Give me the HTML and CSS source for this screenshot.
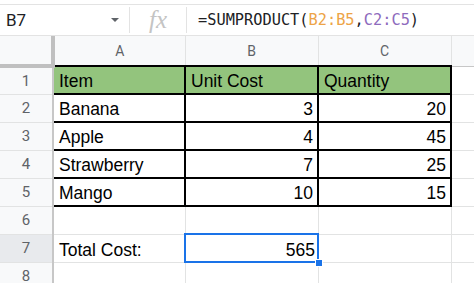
FILE: index.html
```html
<!DOCTYPE html>
<html lang="en">
<head>
    <meta charset="UTF-8">
    <title>SUMPRODUCT example</title>
    <link rel="stylesheet" href="styles.css">
</head>
<body>
    <div class="formula-bar">
        <div class="name-box">
            <span>B7</span>
            <span class="arrow"></span>
        </div>
        <div class="sep"></div>
        <div class="fx">fx</div>
        <div class="sep"></div>
        <div class="formula">=SUMPRODUCT(<span class="ref-b">B2:B5</span>,<span class="ref-c">C2:C5</span>)</div>
    </div>
    <table class="sheet">
        <colgroup>
            <col class="col-rows">
            <col class="col-a">
            <col class="col-b">
            <col class="col-c">
            <col class="col-d">
        </colgroup>
        <tr class="col-heads">
            <th class="corner"></th>
            <th>A</th>
            <th>B</th>
            <th>C</th>
            <th></th>
        </tr>
        <tr>
            <th class="row-head">1</th>
            <td class="box head">Item</td>
            <td class="box head">Unit Cost</td>
            <td class="box head">Quantity</td>
            <td></td>
        </tr>
        <tr>
            <th class="row-head">2</th>
            <td class="box">Banana</td>
            <td class="box num">3</td>
            <td class="box num">20</td>
            <td></td>
        </tr>
        <tr>
            <th class="row-head">3</th>
            <td class="box">Apple</td>
            <td class="box num">4</td>
            <td class="box num">45</td>
            <td></td>
        </tr>
        <tr>
            <th class="row-head">4</th>
            <td class="box">Strawberry</td>
            <td class="box num">7</td>
            <td class="box num">25</td>
            <td></td>
        </tr>
        <tr>
            <th class="row-head">5</th>
            <td class="box">Mango</td>
            <td class="box num">10</td>
            <td class="box num">15</td>
            <td></td>
        </tr>
        <tr>
            <th class="row-head">6</th>
            <td></td>
            <td></td>
            <td></td>
            <td></td>
        </tr>
        <tr>
            <th class="row-head active">7</th>
            <td>Total Cost:</td>
            <td class="num selected"><div class="cell-wrap">565<span class="handle"></span></div></td>
            <td></td>
            <td></td>
        </tr>
        <tr>
            <th class="row-head">8</th>
            <td></td>
            <td></td>
            <td></td>
            <td></td>
        </tr>
    </table>
</body>
</html>
```

FILE: styles.css
```css
body {
    margin: 0;
    width: 474px;
    height: 283px;
    overflow: hidden;
    background: #fff;
    font-family: Roboto, "Liberation Sans", sans-serif;
}

.formula-bar {
    margin-top: 4px;
    height: 30px;
    border-top: 1px solid #e3e3e3;
    border-bottom: 1px solid #e3e3e3;
    display: flex;
    align-items: center;
}
.name-box {
    width: 129px;
    box-sizing: border-box;
    padding: 0 10px 0 6px;
    display: flex;
    align-items: center;
    justify-content: space-between;
    font-size: 17px;
    color: #202124;
}
.arrow {
    width: 0;
    height: 0;
    border-left: 4px solid transparent;
    border-right: 4px solid transparent;
    border-top: 4px solid #5f6368;
}
.sep {
    width: 1px;
    height: 26px;
    background: #e3e3e3;
}
.fx {
    width: 56px;
    text-align: center;
    font-family: "Liberation Serif", serif;
    font-style: italic;
    font-size: 25px;
    color: #c4c4c4;
    line-height: 30px;
}
.formula {
    padding-left: 11px;
    font-family: "DejaVu Sans Mono", monospace;
    font-size: 15.3px;
    color: #202124;
}
.ref-b {
    color: #eda447;
}
.ref-c {
    color: #8e6bbd;
}

.sheet {
    border-collapse: collapse;
    table-layout: fixed;
    width: 496px;
    font-family: "Liberation Sans", Arial, sans-serif;
    font-size: 17.5px;
    line-height: 20px;
    color: #000;
}
.col-rows { width: 53px; }
.col-a { width: 132px; }
.col-b { width: 133px; }
.col-c { width: 133px; }
.col-d { width: 45px; }

.sheet td,
.sheet th {
    border: 1px solid #e2e3e3;
    padding: 0;
    height: 28px;
    box-sizing: border-box;
    white-space: nowrap;
}
.sheet td {
    vertical-align: bottom;
    padding: 0 4px 2px 5px;
}
.sheet tr:first-child th,
.sheet tr:first-child td {
    border-top: none;
}
.sheet tr th:first-child {
    border-left: none;
}

.col-heads th {
    height: 30px;
    background: #f8f9fa;
    font-weight: normal;
    font-family: Roboto, sans-serif;
    font-size: 14px;
    color: #5f6368;
    border-bottom: 1px solid #c7c7c7;
}
.col-heads th.corner {
    border-right: 4px solid #c0c0c0;
    border-bottom: 4px solid #c0c0c0;
}
.row-head {
    background: #f8f9fa;
    font-weight: normal;
    font-family: Roboto, sans-serif;
    font-size: 15px;
    color: #5f6368;
    border-right: 2px solid #c7c7c7 !important;
}
.row-head.active {
    background: #e8eaed;
}

.sheet td.box {
    border: 2px solid #000;
}
.head {
    background: #93c47d;
}
.num {
    text-align: right;
}
.sheet td.selected {
    border: 2px solid #1a73e8;
    padding: 0;
}
.cell-wrap {
    position: relative;
    padding: 0 2px 1px 0;
}
.handle {
    position: absolute;
    right: -6px;
    bottom: -6px;
    width: 6px;
    height: 6px;
    background: #1a73e8;
    border: 1px solid #fff;
}
```
